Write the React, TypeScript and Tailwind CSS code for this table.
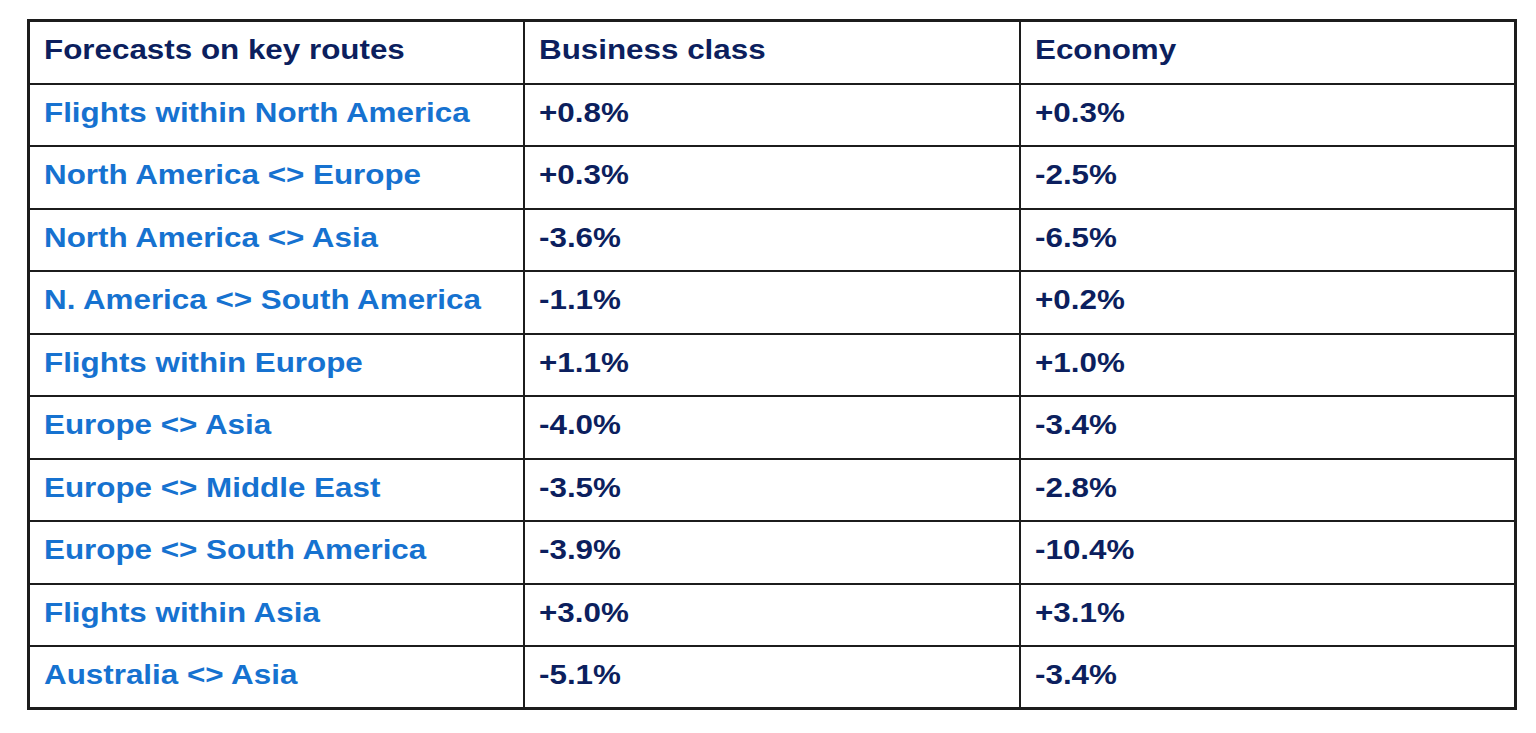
const routes = [
  { route: "Flights within North America", business: "+0.8%", economy: "+0.3%" },
  { route: "North America <> Europe", business: "+0.3%", economy: "-2.5%" },
  { route: "North America <> Asia", business: "-3.6%", economy: "-6.5%" },
  { route: "N. America <> South America", business: "-1.1%", economy: "+0.2%" },
  { route: "Flights within Europe", business: "+1.1%", economy: "+1.0%" },
  { route: "Europe <> Asia", business: "-4.0%", economy: "-3.4%" },
  { route: "Europe <> Middle East", business: "-3.5%", economy: "-2.8%" },
  { route: "Europe <> South America", business: "-3.9%", economy: "-10.4%" },
  { route: "Flights within Asia", business: "+3.0%", economy: "+3.1%" },
  { route: "Australia <> Asia", business: "-5.1%", economy: "-3.4%" },
]

function Cell({ children, className = "" }: { children: React.ReactNode; className?: string }) {
  return (
    <td className="w-1/3 border-2 border-[#1c1c1c] pl-[14px] align-middle">
      <span className={`inline-block origin-left scale-x-[1.12] pb-[4px] text-[28px] leading-none font-bold ${className}`}>
        {children}
      </span>
    </td>
  )
}

export default function App() {
  return (
    <div className="min-h-[733px] bg-white pt-[19px] pl-[27px] font-['Liberation_Sans',Arial,sans-serif]">
      <table className="w-[1490px] table-fixed border-collapse border-[3px] border-[#1c1c1c]">
        <thead>
          <tr className="h-[63px]">
            <Cell className="text-[#0c1f5e]">Forecasts on key routes</Cell>
            <Cell className="text-[#0c1f5e]">Business class</Cell>
            <Cell className="text-[#0c1f5e]">Economy</Cell>
          </tr>
        </thead>
        <tbody>
          {routes.map((r) => (
            <tr key={r.route} className="h-[62.5px]">
              <Cell className="text-[#1672d0]">{r.route}</Cell>
              <Cell className="text-[#0c1f5e]">{r.business}</Cell>
              <Cell className="text-[#0c1f5e]">{r.economy}</Cell>
            </tr>
          ))}
        </tbody>
      </table>
    </div>
  )
}
